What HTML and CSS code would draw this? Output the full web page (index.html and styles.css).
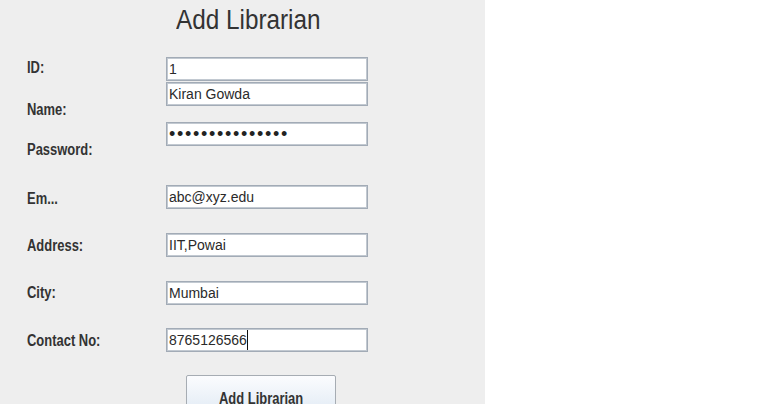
FILE: index.html
```html
<!DOCTYPE html>
<html lang="en">
<head>
<meta charset="utf-8">
<title>Add Librarian</title>
<link rel="stylesheet" href="styles.css">
</head>
<body>
<div class="page">
  <div class="panel">
    <h1 class="title"><span class="narrow title-text">Add Librarian</span></h1>
    <div class="form">
      <div class="labels">
        <div class="lab"><span class="narrow">ID:</span></div>
        <div class="lab lab-name"><span class="narrow">Name:</span></div>
        <div class="lab lab-pass"><span class="narrow">Password:</span></div>
        <div class="lab lab-email"><span class="narrow">Em...</span></div>
        <div class="lab lab-addr"><span class="narrow">Address:</span></div>
        <div class="lab lab-city"><span class="narrow">City:</span></div>
        <div class="lab lab-contact"><span class="narrow">Contact No:</span></div>
      </div>
      <div class="fields">
        <div class="field">1</div>
        <div class="field f-name">Kiran Gowda</div>
        <div class="field f-pass"><span class="dots">•••••••••••••••</span></div>
        <div class="field f-email">abc@xyz.edu</div>
        <div class="field f-addr">IIT,Powai</div>
        <div class="field f-city">Mumbai</div>
        <div class="field f-contact"><span class="caret">8765126566</span></div>
        <button class="btn" type="button"><span class="narrow btn-label">Add Librarian</span></button>
      </div>
    </div>
  </div>
  <div class="blank"></div>
</div>
</body>
</html>
```
FILE: styles.css
```css
html, body {
  margin: 0;
  padding: 0;
  background: #ffffff;
}
.page {
  display: flex;
  width: 768px;
  height: 404px;
  overflow: hidden;
}
.panel {
  width: 485px;
  height: 404px;
  background: #eeeeee;
  flex: none;
}
.blank {
  flex: 1;
  background: #ffffff;
}
.narrow {
  display: inline-block;
  transform: scaleX(0.81);
  transform-origin: 0 50%;
  white-space: nowrap;
}
.title-text {
  transform: scaleX(0.9);
}
.title {
  margin: 0;
  padding: 4px 0 0 176px;
  height: 32px;
  line-height: 32px;
  font-family: "Liberation Sans", Arial, sans-serif;
  font-weight: normal;
  font-size: 27px;
  color: #333333;
}
.form {
  display: flex;
  margin-top: 21px;
}
.labels {
  display: flex;
  flex-direction: column;
  width: 166px;
  padding-left: 27px;
  padding-top: 1px;
  box-sizing: border-box;
  flex: none;
}
.lab {
  height: 20px;
  line-height: 20px;
  font-family: "Liberation Sans", Arial, sans-serif;
  font-weight: bold;
  font-size: 16px;
  color: #333333;
  white-space: nowrap;
}
.lab-name { margin-top: 22px; }
.lab-pass { margin-top: 20px; }
.lab-email { margin-top: 29px; }
.lab-addr, .lab-city { margin-top: 27px; }
.lab-contact { margin-top: 28px; }

.fields {
  display: flex;
  flex-direction: column;
  width: 202px;
  flex: none;
}
.field {
  height: 24px;
  box-sizing: border-box;
  border: 1px solid #a2abb6;
  box-shadow: inset 0 0 0 1px #c2c9d1;
  background: #ffffff;
  padding: 0 2px;
  line-height: 22px;
  font-family: "Liberation Sans", Arial, sans-serif;
  font-size: 14px;
  color: #2a2a2a;
  white-space: nowrap;
  overflow: hidden;
}
.f-name { margin-top: 1px; }
.f-pass { margin-top: 16px; }
.f-email { margin-top: 39px; }
.f-addr, .f-city { margin-top: 24px; }
.f-contact { margin-top: 23px; }
.dots {
  font-size: 18px;
  letter-spacing: 1.7px;
  color: #222222;
}
.caret {
  display: inline-block;
  height: 20px;
  line-height: 20px;
  vertical-align: top;
  margin-top: 1px;
  border-right: 1px solid #111111;
}
.btn {
  margin: 23px 0 0 20px;
  width: 150px;
  height: 48px;
  padding: 0 0 0 32px;
  border: 1px solid #a6acb3;
  border-radius: 2px;
  background: linear-gradient(#fbfcfe, #dbe6f2);
  font-family: "Liberation Sans", Arial, sans-serif;
  font-weight: bold;
  font-size: 16px;
  color: #333333;
  text-align: left;
  flex: none;
}
```
